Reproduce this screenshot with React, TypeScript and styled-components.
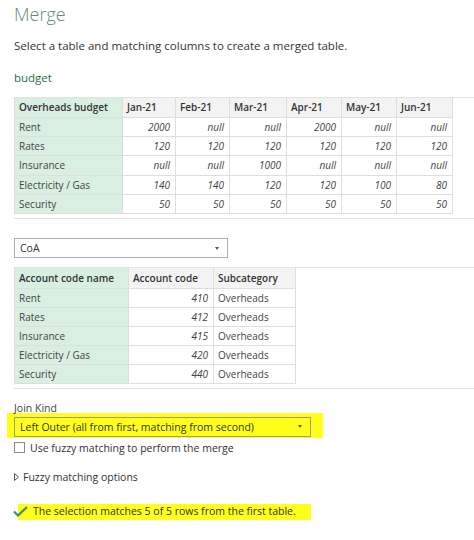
import styled, { createGlobalStyle } from "styled-components";

const GlobalStyle = createGlobalStyle`
  html, body {
    margin: 0;
    padding: 0;
    background: #ffffff;
  }
  body {
    font-family: "Open Sans", "Noto Sans", sans-serif;
    color: #333333;
  }
`;

const Page = styled.div`
  width: 474px;
  height: 540px;
  overflow: hidden;
  padding-left: 14px;
  box-sizing: border-box;
`;

const Title = styled.h1`
  margin: 0;
  padding-top: 2px;
  font-size: 18px;
  font-weight: 300;
  line-height: 24px;
  color: #688a78;
`;

const Subtitle = styled.p`
  margin: 12px 0 0;
  font-size: 11.5px;
  line-height: 16px;
  color: #333333;
`;

const TableName = styled.div`
  margin-top: 16px;
  font-size: 11.5px;
  line-height: 16px;
  color: #2d6a45;
`;

const Preview = styled.div<{ $top: number }>`
  margin-top: ${(p) => p.$top}px;
  border-top: 1px solid #e3e3e3;
  border-bottom: 1px solid #e3e3e3;
  padding-bottom: 4px;
`;

const Grid = styled.table`
  border-collapse: collapse;
  font-size: 10px;
  table-layout: fixed;
`;

const Head = styled.th<{ $key?: boolean; $h: number }>`
  height: ${(p) => p.$h}px;
  padding: 0 4px;
  text-align: left;
  font-weight: 600;
  color: #333333;
  background: ${(p) => (p.$key ? "#d8efe1" : "#f3f3f3")};
  border: 1px solid #dedede;
  border-top: none;
  white-space: nowrap;
  box-sizing: border-box;
`;

const Cell = styled.td<{ $key?: boolean; $num?: boolean; $h: number }>`
  height: ${(p) => p.$h}px;
  padding: 0 5px 0 4px;
  text-align: ${(p) => (p.$num ? "right" : "left")};
  font-style: ${(p) => (p.$num ? "italic" : "normal")};
  color: #444444;
  background: ${(p) => (p.$key ? "#d8efe1" : "#ffffff")};
  border: 1px solid #dedede;
  white-space: nowrap;
  box-sizing: border-box;
`;

const Select = styled.div<{ $width: number; $border: string }>`
  width: ${(p) => p.$width}px;
  height: 20px;
  box-sizing: border-box;
  border: 1px solid ${(p) => p.$border};
  display: flex;
  align-items: center;
  justify-content: space-between;
  padding: 0 8px 0 5px;
  font-size: 10.5px;
  color: #333333;
`;

const Caret = styled.span`
  width: 0;
  height: 0;
  border-left: 2.5px solid transparent;
  border-right: 2.5px solid transparent;
  border-top: 3px solid #555555;
`;

const CoaSelect = styled(Select)`
  margin-top: 19px;
`;

const Label = styled.div`
  margin-top: 12px;
  font-size: 10.5px;
  line-height: 14px;
  color: #444444;
`;

const Marker = styled.div`
  margin: -2px 0 0 -7px;
  padding: 4px 12px 1px 7px;
  width: fit-content;
  background: #ffff1a;
`;

const CheckRow = styled.label`
  display: flex;
  align-items: center;
  gap: 5px;
  margin-top: 3px;
  font-size: 10.5px;
  line-height: 14px;
  color: #333333;
`;

const Box = styled.span`
  width: 11px;
  height: 11px;
  box-sizing: border-box;
  border: 1px solid #8a8a8a;
  background: #ffffff;
`;

const Expander = styled.div`
  display: flex;
  align-items: center;
  gap: 4px;
  margin-top: 15px;
  font-size: 10.5px;
  line-height: 14px;
  color: #333333;
`;

const Status = styled.div`
  display: flex;
  align-items: center;
  margin-top: 20px;
  font-size: 10.5px;
  color: #333333;

  & svg {
    position: relative;
    z-index: 1;
    margin-left: -1px;
    flex: none;
  }
`;

const StatusText = styled.span`
  background: #ffff1a;
  padding: 0 15px 1px 15px;
  margin-left: -10px;
  line-height: 15px;
`;

const budgetCols = ["Jan-21", "Feb-21", "Mar-21", "Apr-21", "May-21", "Jun-21"];
const budgetWidths = [108, 53, 54, 57, 55, 55, 56];
const budgetRows: [string, string[]][] = [
  ["Rent", ["2000", "null", "null", "2000", "null", "null"]],
  ["Rates", ["120", "120", "120", "120", "120", "120"]],
  ["Insurance", ["null", "null", "1000", "null", "null", "null"]],
  ["Electricity / Gas", ["140", "140", "120", "120", "100", "80"]],
  ["Security", ["50", "50", "50", "50", "50", "50"]],
];

const coaRows: [string, string][] = [
  ["Rent", "410"],
  ["Rates", "412"],
  ["Insurance", "415"],
  ["Electricity / Gas", "420"],
  ["Security", "440"],
];

export default function App() {
  return (
    <>
      <GlobalStyle />
      <Page>
        <Title>Merge</Title>
        <Subtitle>Select a table and matching columns to create a merged table.</Subtitle>
        <TableName>budget</TableName>

        <Preview $top={11}>
          <Grid style={{ width: budgetWidths.reduce((a, b) => a + b, 0) }}>
            <colgroup>
              {budgetWidths.map((w, i) => (
                <col key={i} style={{ width: w }} />
              ))}
            </colgroup>
            <thead>
              <tr>
                <Head $key $h={19}>
                  Overheads budget
                </Head>
                {budgetCols.map((c) => (
                  <Head key={c} $h={19}>
                    {c}
                  </Head>
                ))}
              </tr>
            </thead>
            <tbody>
              {budgetRows.map(([name, vals]) => (
                <tr key={name}>
                  <Cell $key $h={19.4}>
                    {name}
                  </Cell>
                  {vals.map((v, i) => (
                    <Cell key={i} $num $h={19.4}>
                      {v}
                    </Cell>
                  ))}
                </tr>
              ))}
            </tbody>
          </Grid>
        </Preview>

        <CoaSelect $width={214} $border="#adadad">
          <span>CoA</span>
          <Caret />
        </CoaSelect>

        <Preview $top={9}>
          <Grid style={{ width: 281 }}>
            <colgroup>
              <col style={{ width: 114 }} />
              <col style={{ width: 85 }} />
              <col style={{ width: 82 }} />
            </colgroup>
            <thead>
              <tr>
                <Head $key $h={20}>
                  Account code name
                </Head>
                <Head $h={20}>Account code</Head>
                <Head $h={20}>Subcategory</Head>
              </tr>
            </thead>
            <tbody>
              {coaRows.map(([name, code]) => (
                <tr key={name}>
                  <Cell $key $h={19}>
                    {name}
                  </Cell>
                  <Cell $num $h={19}>
                    {code}
                  </Cell>
                  <Cell $h={19}>Overheads</Cell>
                </tr>
              ))}
            </tbody>
          </Grid>
        </Preview>

        <Label>Join Kind</Label>
        <Marker>
          <Select $width={297} $border="#9a9a9a">
            <span>Left Outer (all from first, matching from second)</span>
            <Caret />
          </Select>
        </Marker>

        <CheckRow>
          <Box />
          <span>Use fuzzy matching to perform the merge</span>
        </CheckRow>

        <Expander>
          <svg width="5" height="8" viewBox="0 0 5 8">
            <path d="M0.5 0.5 L4.5 4 L0.5 7.5 Z" fill="none" stroke="#555" strokeWidth="1" />
          </svg>
          <span>Fuzzy matching options</span>
        </Expander>

        <Status>
          <svg width="15" height="11" viewBox="0 0 15 11">
            <path d="M1 5.5 L5 9.5 L14 1" fill="none" stroke="#3f8c6f" strokeWidth="2.2" />
          </svg>
          <StatusText>The selection matches 5 of 5 rows from the first table.</StatusText>
        </Status>
      </Page>
    </>
  );
}
